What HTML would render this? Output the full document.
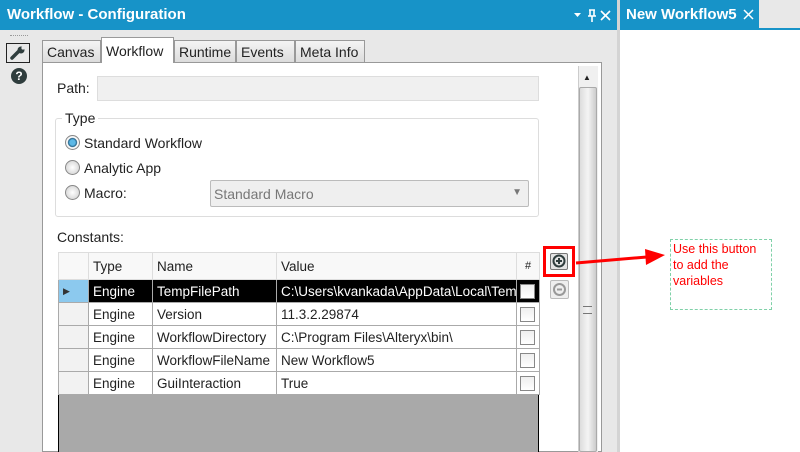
<!DOCTYPE html>
<html><head><style>
*{box-sizing:border-box;margin:0;padding:0}
body{width:800px;height:452px;overflow:hidden;position:relative;background:#fff;font-family:"Liberation Sans",sans-serif;font-size:14px;color:#222}
.a{position:absolute;white-space:nowrap}
.tb{background:#1793c8;color:#fff;font-weight:bold;font-size:15px}
.tab{position:absolute;top:40px;height:22px;border:1px solid #999;border-bottom:none;background:linear-gradient(#f4f4f4,#dcdcdc);padding:3px 4px;font-size:14px;white-space:nowrap}
.rad{position:absolute;width:15px;height:15px;border-radius:50%;border:1px solid #888;background:radial-gradient(#fff,#ccc)}
table{border-collapse:collapse;position:absolute;left:58px;top:252px;width:481px;font-size:13.5px;table-layout:fixed}
td{border:1px solid #aaa;height:23px;padding:0 4px;white-space:nowrap;overflow:hidden}
.cb{display:inline-block;width:15px;height:15px;border:1px solid #888;background:linear-gradient(#eee,#fff);vertical-align:middle}
</style></head><body>
<div class="a tb" style="left:0;top:0;width:617px;height:30px;padding:6px 7px">Workflow - Configuration
<svg style="position:absolute;left:573px;top:9px" width="40" height="14"><polygon points="1,4 8,4 4.5,8" fill="#fff"/><path d="M16 1h6M17 1v6M21 1v6M15 7h8M19 7v6" stroke="#fff" stroke-width="1.6" fill="none"/><path d="M28 2l9 9M37 2l-9 9" stroke="#fff" stroke-width="1.6"/></svg></div>
<div class="a" style="left:617px;top:0;width:3px;height:452px;background:#d4d4d4"></div>
<div class="a" style="left:620px;top:0;width:180px;height:29px;background:#e8e8e8"></div>
<div class="a tb" style="left:620px;top:0;width:139px;height:28px;padding:6px 6px">New Workflow5</div>
<svg class="a" style="left:743px;top:9px" width="12" height="12"><path d="M1 1l9 9M10 1l-9 9" stroke="#fff" stroke-width="1.5"/></svg>
<div class="a" style="left:620px;top:28px;width:180px;height:2px;background:#1793c8"></div>
<div class="a" style="left:0;top:30px;width:617px;height:422px;background:#e8e8e8"></div>
<div class="a" style="left:10px;top:35px;width:18px;border-top:1px dotted #999"></div>
<div class="a" style="left:6px;top:43px;width:24px;height:20px;border:1.5px solid #222"></div>
<svg class="a" style="left:9px;top:45px" width="18" height="16"><path d="M3 13l7-7" stroke="#2f3d3d" stroke-width="3.5" stroke-linecap="round"/><circle cx="12" cy="5" r="3.5" fill="#2f3d3d"/><circle cx="14" cy="3" r="1.6" fill="#e8e8e8"/></svg>
<div class="a" style="left:11px;top:68px;width:16px;height:16px;border-radius:50%;background:#2f3d3d;color:#fff;font-weight:bold;font-size:12px;text-align:center;line-height:16px">?</div>
<div class="a" style="left:42px;top:62px;width:560px;height:390px;background:#fff;border:1px solid #999"></div>
<div class="tab" style="left:42px;width:59px">Canvas</div>
<div class="tab" style="left:101px;top:37px;height:26px;width:73px;background:#fff;padding-top:5px">Workflow</div>
<div class="tab" style="left:174px;width:62px">Runtime</div>
<div class="tab" style="left:236px;width:59px">Events</div>
<div class="tab" style="left:295px;width:70px">Meta Info</div>
<div class="a" style="left:57px;top:80px">Path:</div>
<div class="a" style="left:97px;top:76px;width:442px;height:25px;background:#f0f0f0;border:1px solid #ddd"></div>
<div class="a" style="left:55px;top:118px;width:484px;height:99px;border:1px solid #ddd;border-radius:3px"></div>
<div class="a" style="left:62px;top:110px;background:#fff;padding:0 3px">Type</div>
<div class="rad" style="left:65px;top:135px;background:radial-gradient(#5cb8e6 30%,#1f5f86 45%,#fff 55%,#ccc)"></div>
<div class="a" style="left:84px;top:135px">Standard Workflow</div>
<div class="rad" style="left:65px;top:160px"></div>
<div class="a" style="left:84px;top:160px">Analytic App</div>
<div class="rad" style="left:65px;top:185px"></div>
<div class="a" style="left:84px;top:185px">Macro:</div>
<div class="a" style="left:210px;top:180px;width:319px;height:27px;background:#efefef;border:1px solid #bbb;border-radius:2px;color:#777;padding:5px 3px">Standard Macro<span style="position:absolute;right:6px;top:6px;font-size:10px">▼</span></div>
<div class="a" style="left:57px;top:229px">Constants:</div>
<div class="a" style="left:58px;top:252px;width:481px;height:200px;background:#a9a9a9;border:1px solid #000;border-bottom:none"></div>
<table>
<colgroup><col style="width:30px"><col style="width:64px"><col style="width:124px"><col style="width:240px"><col style="width:23px"></colgroup>
<tr style="background:#f8f8f8"><td style="height:27px;border-color:#ddd"></td><td style="border-color:#ddd">Type</td><td style="border-color:#ddd">Name</td><td style="border-color:#ddd">Value</td><td style="font-size:11px;text-align:center;border-color:#ddd">#</td></tr>
<tr style="background:#000;color:#fff"><td style="background:#8cc9ee;color:#333;font-size:9px">▶</td><td>Engine</td><td>TempFilePath</td><td>C:\Users\kvankada\AppData\Local\Tem</td><td style="padding:0 3px"><span class="cb"></span></td></tr>
<tr style="background:#fff"><td style="background:#f2f2f2"></td><td>Engine</td><td>Version</td><td>11.3.2.29874</td><td style="padding:0 3px"><span class="cb"></span></td></tr>
<tr style="background:#fff"><td style="background:#f2f2f2"></td><td>Engine</td><td>WorkflowDirectory</td><td>C:\Program Files\Alteryx\bin\</td><td style="padding:0 3px"><span class="cb"></span></td></tr>
<tr style="background:#fff"><td style="background:#f2f2f2"></td><td>Engine</td><td>WorkflowFileName</td><td>New Workflow5</td><td style="padding:0 3px"><span class="cb"></span></td></tr>
<tr style="background:#fff"><td style="background:#f2f2f2"></td><td>Engine</td><td>GuiInteraction</td><td>True</td><td style="padding:0 3px"><span class="cb"></span></td></tr>
</table>
<div class="a" style="left:578px;top:66px;width:20px;height:386px;background:#f0f0f0;border-left:1px solid #ccc"></div>
<div class="a" style="left:583px;top:73px;font-size:8px">▲</div>
<div class="a" style="left:579px;top:87px;width:18px;height:365px;background:linear-gradient(90deg,#ddd,#f4f4f4,#ccc);border:1px solid #aaa;border-radius:2px"></div>
<div class="a" style="left:583px;top:306px;width:9px;height:8px;border-top:1px solid #777;border-bottom:1px solid #777"></div>
<div class="a" style="left:543px;top:246px;width:32px;height:31px;border:3px solid #f00"></div>
<div class="a" style="left:550px;top:253px;width:18px;height:17px;border:1px solid #777;border-radius:2px;background:#e4e4e4"></div>
<svg class="a" style="left:552px;top:254px" width="14" height="14"><circle cx="7" cy="7" r="5.5" fill="none" stroke="#2f3d3d" stroke-width="2"/><path d="M7 4v6M4 7h6" stroke="#2f3d3d" stroke-width="2"/></svg>
<div class="a" style="left:550px;top:280px;width:19px;height:19px;border:1px solid #bbb;border-radius:2px;background:#eee"></div>
<svg class="a" style="left:552px;top:282px" width="15" height="15"><circle cx="7.5" cy="7.5" r="5.5" fill="none" stroke="#999" stroke-width="2"/><path d="M5 7.5h5" stroke="#999" stroke-width="2"/></svg>
<svg class="a" style="left:575px;top:245px" width="95" height="25"><line x1="1" y1="18" x2="72" y2="12" stroke="#f00" stroke-width="3"/><polygon points="70,4 90,10 71,20" fill="#f00"/></svg>
<div class="a" style="left:670px;top:239px;width:102px;height:71px;border:1px dashed #7fd1a8;color:#f00;font-size:12.5px;line-height:16px;padding:1px 2px;white-space:normal">Use this button to add the variables</div>
</body></html>
